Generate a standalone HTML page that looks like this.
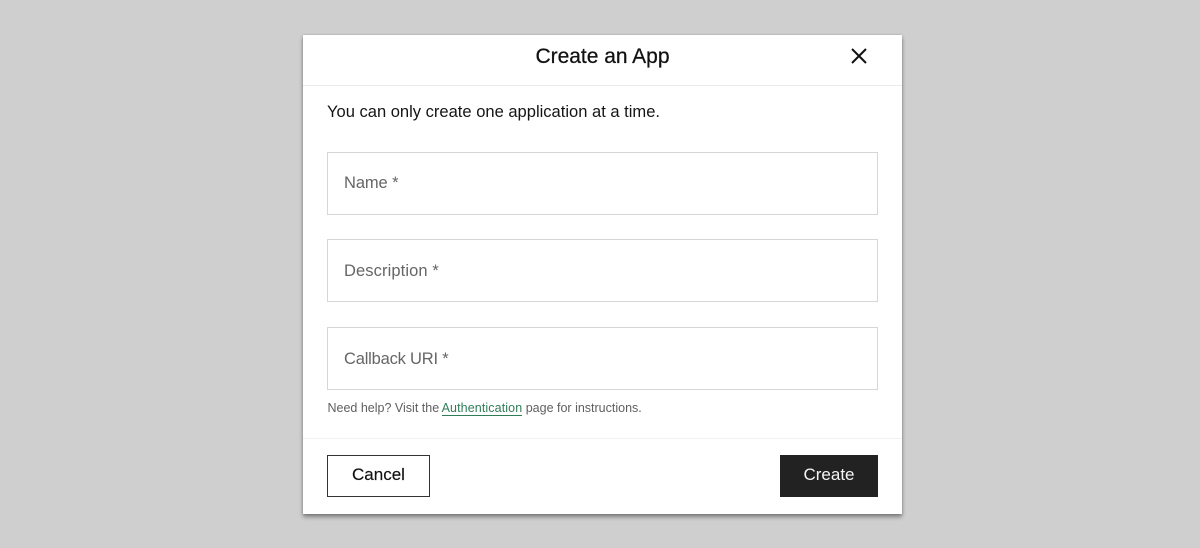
<!DOCTYPE html>
<html>
<head>
<meta charset="utf-8">
<style>
html,body{margin:0;padding:0;width:1200px;height:548px;overflow:hidden;background:#cfcfcf;font-family:"Liberation Sans",sans-serif;}
.a{position:absolute;white-space:nowrap;}
#m{position:absolute;left:303px;top:35px;width:599px;height:479px;background:#fff;box-shadow:0 3px 4px rgba(0,0,0,.38),0 0 2px rgba(0,0,0,.2);}
.inp{position:absolute;left:327px;width:549px;height:61px;border:1px solid #d6d6d6;background:#fff;}
.ph{position:absolute;left:344px;font-size:16.500px;line-height:20px;color:#666;white-space:nowrap;}
</style>
</head>
<body>
<div id="m"></div>
<div class="a" style="left:303px;top:85px;width:599px;height:1px;background:#ebebeb"></div>
<div class="a" style="left:303px;top:438px;width:599px;height:1px;background:#f1f1f1"></div>
<div class="a" style="left:503px;width:199px;text-align:center;top:44px;font-size:21px;line-height:26px;letter-spacing:-.02px;color:#111;-webkit-text-stroke:.25px #111;">Create an App</div>
<svg class="a" style="left:849px;top:46px" width="19" height="19" viewBox="0 0 19 19"><path d="M3 3L17 17M17 3L3 17" stroke="#111" stroke-width="2" fill="none"/></svg>
<div class="a" style="left:327px;top:102px;font-size:16.550px;line-height:20px;color:#151515;">You can only create one application at a time.</div>
<div class="inp" style="top:152px"></div>
<div class="ph" style="top:173px;letter-spacing:-.1px">Name *</div>
<div class="inp" style="top:239px"></div>
<div class="ph" style="top:261px;letter-spacing:.1px">Description *</div>
<div class="inp" style="top:327px"></div>
<div class="ph" style="top:349px;letter-spacing:-.2px">Callback URI *</div>
<div class="a" style="left:327.500px;top:400px;font-size:12.500px;line-height:16px;color:#5f5f5f;">Need help? Visit the <span style="color:#2f7d57;border-bottom:1px solid #2f7d57;margin-left:-1px;letter-spacing:.1px">Authentication</span> page for instructions.</div>
<div class="a" style="left:327px;top:455px;width:101px;height:40px;border:1px solid #333;background:#fff;text-align:center;font-size:17px;line-height:38px;color:#111;-webkit-text-stroke:.15px #111;">Cancel</div>
<div class="a" style="left:780px;top:455px;width:98px;height:42px;background:#222;text-align:center;font-size:17px;line-height:40px;color:#f5f5f5;">Create</div>
</body>
</html>
